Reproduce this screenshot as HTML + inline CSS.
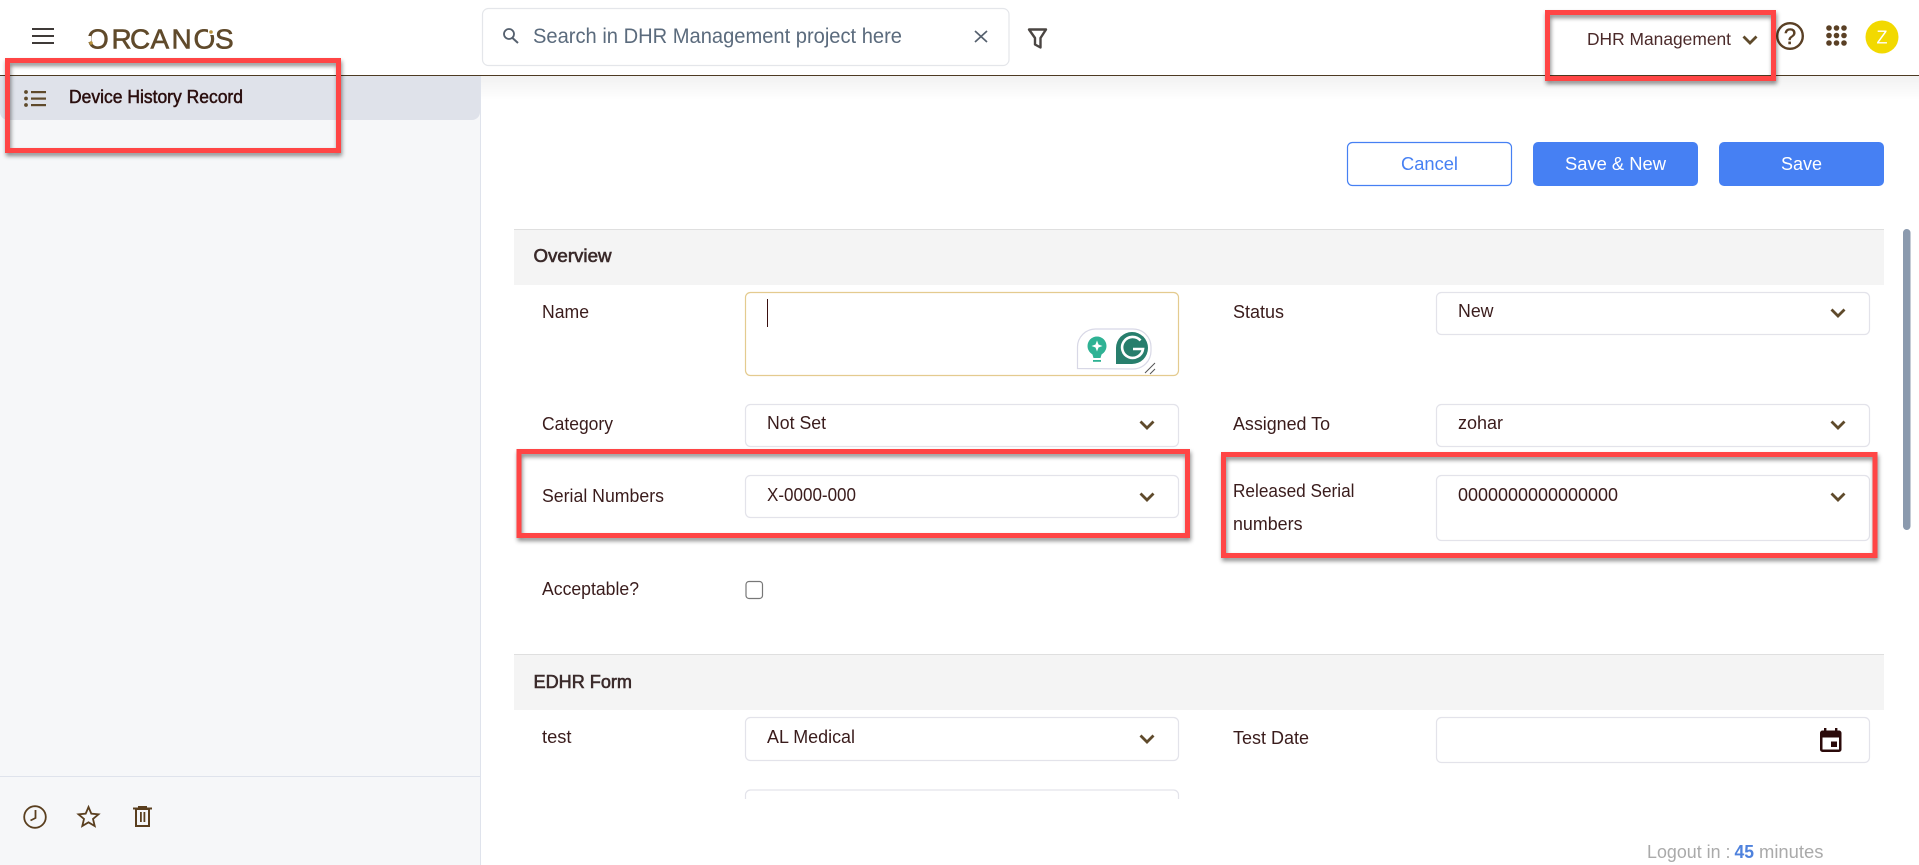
<!DOCTYPE html>
<html lang="en">
<head>
<meta charset="utf-8">
<title>DHR Management</title>
<style>
html,body{margin:0;padding:0;background:#fff;width:1919px;height:865px;overflow:hidden}
svg{display:block}
text{font-family:"Liberation Sans",Arial,sans-serif}
.l{font-size:18px;fill:#3a1c1c}
.v{font-size:18px;fill:#3a1c1c}
.h{font-size:18px;fill:#3a2a2a;stroke:#3a2a2a;stroke-width:.6}
.box{fill:#fff;stroke:#e3e3ea;stroke-width:1.2}
.red{fill:none;stroke:#ff4444;stroke-width:5}
</style>
</head>
<body>
<svg width="1919" height="865" viewBox="0 0 1919 865" xmlns="http://www.w3.org/2000/svg">
<defs>
<linearGradient id="hs" x1="0" y1="0" x2="0" y2="1"><stop offset="0" stop-color="#f1f1f1"/><stop offset="1" stop-color="#fff"/></linearGradient>
<filter id="ds" x="-5%" y="-15%" width="110%" height="130%"><feDropShadow dx="1" dy="3" stdDeviation="2" flood-color="#000" flood-opacity=".45"/></filter>
<path id="chev" d="M-6.500 -3.500 L0 3 L6.500 -3.500" fill="none" stroke="#5f4a2b" stroke-width="2.800"/>
</defs>

<!-- page -->
<rect width="1919" height="865" fill="#fff"/>
<rect x="481" y="76" width="1438" height="24" fill="url(#hs)"/>

<!-- sidebar -->
<rect x="0" y="76" width="480" height="789" fill="#f6f7f9"/>
<rect x="480" y="76" width="1" height="789" fill="#dfe3ec"/>
<path d="M0 76H480V112a8 8 0 0 1-8 8H8a8 8 0 0 1-8-8Z" fill="#dfe2ea"/>
<g fill="#5f4a2b">
<circle cx="26" cy="92" r="1.900"/><circle cx="26" cy="98.500" r="1.900"/><circle cx="26" cy="105" r="1.900"/>
<rect x="31" y="91" width="15" height="2.200"/><rect x="31" y="97.500" width="15" height="2.200"/><rect x="31" y="104" width="15" height="2.200"/>
</g>
<text x="69" y="103" font-size="18" fill="#2a0e0e" stroke="#2a0e0e" stroke-width=".5" textLength="174" lengthAdjust="spacingAndGlyphs">Device History Record</text>
<rect x="0" y="776" width="480" height="1" fill="#dfe3ec"/>
<!-- clock -->
<circle cx="35" cy="817" r="10.800" fill="none" stroke="#5a3f1f" stroke-width="1.800"/>
<path d="M35.500 810V818L30.500 820.500" fill="none" stroke="#5a3f1f" stroke-width="1.800"/>
<!-- star -->
<path d="M88.500 807L91.300 813.600 98.500 814.300 93 819 94.700 826 88.500 822.300 82.300 826 84 819 78.500 814.300 85.700 813.600Z" fill="none" stroke="#5a3f1f" stroke-width="1.800"/>
<!-- trash -->
<g fill="#5a3f1f">
<rect x="133" y="807.500" width="19" height="2"/><rect x="138" y="806" width="9" height="2"/>
<path d="M135 809H150V827H135ZM137 810V825H148V810Z" fill-rule="evenodd"/>
<rect x="140" y="812" width="1.800" height="10"/><rect x="143.500" y="812" width="1.800" height="10"/>
</g>

<!-- header -->
<rect x="0" y="75" width="1919" height="1" fill="#4d3a22"/>
<g fill="#3f3a38">
<rect x="32" y="28" width="22" height="2"/><rect x="32" y="35" width="22" height="2"/><rect x="32" y="42" width="22" height="2"/>
</g>
<!-- logo -->
<text x="87 111.500 130 150.500 171.500 193.500 215" y="48.500" font-size="28" fill="#604a2b" stroke="#604a2b" stroke-width=".6">ORCANOS</text>
<rect x="85" y="36" width="6" height="6" fill="#fff"/>
<circle cx="91" cy="43" r="1.800" fill="#b8923c"/>
<rect x="208" y="28" width="7" height="7" fill="#fff"/>
<circle cx="211" cy="32" r="1.800" fill="#b8923c"/>

<!-- search -->
<rect x="482.500" y="8.500" width="526.500" height="57" rx="6" fill="#fff" stroke="#e4e6ea" stroke-width="1.200"/>
<circle cx="509" cy="34" r="5" fill="none" stroke="#55606e" stroke-width="1.800"/>
<path d="M512.500 38L518 43" stroke="#55606e" stroke-width="2"/>
<text x="533" y="43" font-size="21" fill="#5b6b7d" textLength="369" lengthAdjust="spacingAndGlyphs">Search in DHR Management project here</text>
<path d="M975 31L987 42M987 31L975 42" stroke="#55606e" stroke-width="1.700"/>
<path d="M1029 29.500H1046L1040.500 38V47.500L1035 44.500V38Z" fill="none" stroke="#4a4542" stroke-width="2.400" stroke-linejoin="round"/>

<!-- right header -->
<text x="1587" y="45" font-size="17.500" fill="#4b2a2a" textLength="144" lengthAdjust="spacingAndGlyphs">DHR Management</text>
<use href="#chev" x="1750" y="40"/>
<circle cx="1790" cy="36" r="12.800" fill="none" stroke="#5a4025" stroke-width="2.400"/>
<text x="1790" y="44" font-size="22" fill="#5a4025" stroke="#5a4025" stroke-width=".5" text-anchor="middle">?</text>
<g fill="#5a4025">
<circle cx="1829" cy="28" r="2.800"/><circle cx="1836.500" cy="28" r="2.800"/><circle cx="1844" cy="28" r="2.800"/>
<circle cx="1829" cy="35.500" r="2.800"/><circle cx="1836.500" cy="35.500" r="2.800"/><circle cx="1844" cy="35.500" r="2.800"/>
<circle cx="1829" cy="43" r="2.800"/><circle cx="1836.500" cy="43" r="2.800"/><circle cx="1844" cy="43" r="2.800"/>
</g>
<circle cx="1882" cy="37" r="16.500" fill="#f2d900"/>
<text x="1882" y="43.500" font-size="18" fill="#fff" text-anchor="middle">Z</text>

<!-- buttons -->
<rect x="1347.500" y="142.500" width="164" height="43" rx="5" fill="#fff" stroke="#4680f3" stroke-width="1.200"/>
<text x="1401" y="170" font-size="18" fill="#4680f3" textLength="57" lengthAdjust="spacingAndGlyphs">Cancel</text>
<rect x="1533" y="142" width="165" height="44" rx="5" fill="#4680f3"/>
<text x="1565" y="170" font-size="18" fill="#fff" textLength="101" lengthAdjust="spacingAndGlyphs">Save &amp; New</text>
<rect x="1719" y="142" width="165" height="44" rx="5" fill="#4680f3"/>
<text x="1781" y="170" font-size="18" fill="#fff" textLength="41" lengthAdjust="spacingAndGlyphs">Save</text>

<!-- Overview -->
<rect x="514" y="229" width="1370" height="56" fill="#f4f4f4"/>
<rect x="514" y="229" width="1370" height="1" fill="#dfdfdf"/>
<text class="h" x="533.500" y="262" textLength="78" lengthAdjust="spacingAndGlyphs">Overview</text>

<text class="l" x="542" y="318" textLength="47" lengthAdjust="spacingAndGlyphs">Name</text>
<rect x="745.500" y="292.500" width="433" height="83" rx="5" fill="#fff" stroke="#e4cb8f" stroke-width="1.200"/>
<rect x="767" y="299" width="1" height="28" fill="#3a1010"/>
<!-- grammarly widget -->
<path d="M1077.500 368.500V347a18 18 0 0 1 18-18H1133a18 18 0 0 1 18 18V351a18 18 0 0 1-18 18Z" fill="#fff" stroke="#d8d8e6" stroke-width="1.200"/>
<circle cx="1097" cy="346" r="9.500" fill="#2fb294"/>
<path d="M1092 353H1102L1100.500 358H1093.500Z" fill="#2fb294"/>
<rect x="1093" y="360" width="8" height="1.800" fill="#2fb294"/>
<path d="M1097 340.500L1098.500 344.500 1102.500 346 1098.500 347.500 1097 351.500 1095.500 347.500 1091.500 346 1095.500 344.500Z" fill="#fff"/>
<path d="M1116 348a16 16 0 1 1 16 16H1116Z" fill="#277e6c"/>
<path d="M1140.500 340.500A10.500 10.500 0 1 0 1143 349H1133" fill="none" stroke="#fff" stroke-width="2.600"/>
<path d="M1145 373L1155 363M1150 374L1155 369" stroke="#555" stroke-width="1"/>

<text class="l" x="1233" y="318" textLength="51" lengthAdjust="spacingAndGlyphs">Status</text>
<rect class="box" x="1436.500" y="292.500" width="433" height="42" rx="5"/>
<text class="v" x="1458" y="317" textLength="35.500" lengthAdjust="spacingAndGlyphs">New</text>
<use href="#chev" x="1838" y="313"/>

<text class="l" x="542" y="430" textLength="71" lengthAdjust="spacingAndGlyphs">Category</text>
<rect class="box" x="745.500" y="404.500" width="433" height="42" rx="5"/>
<text class="v" x="767" y="429" textLength="59" lengthAdjust="spacingAndGlyphs">Not Set</text>
<use href="#chev" x="1147" y="425"/>

<text class="l" x="1233" y="430" textLength="97" lengthAdjust="spacingAndGlyphs">Assigned To</text>
<rect class="box" x="1436.500" y="404.500" width="433" height="42" rx="5"/>
<text class="v" x="1458" y="429" textLength="45" lengthAdjust="spacingAndGlyphs">zohar</text>
<use href="#chev" x="1838" y="425"/>

<text class="l" x="542" y="502" textLength="122" lengthAdjust="spacingAndGlyphs">Serial Numbers</text>
<rect class="box" x="745.500" y="475.500" width="433" height="42" rx="5"/>
<text class="v" x="767" y="501" textLength="89" lengthAdjust="spacingAndGlyphs">X-0000-000</text>
<use href="#chev" x="1147" y="497"/>

<text class="l" x="1233" y="497" textLength="121.500" lengthAdjust="spacingAndGlyphs">Released Serial</text>
<text class="l" x="1233" y="530" textLength="69.500" lengthAdjust="spacingAndGlyphs">numbers</text>
<rect class="box" x="1436.500" y="475.500" width="433" height="65" rx="5"/>
<text class="v" x="1458" y="501" textLength="160" lengthAdjust="spacingAndGlyphs">0000000000000000</text>
<use href="#chev" x="1838" y="497"/>

<text class="l" x="542" y="595" textLength="97" lengthAdjust="spacingAndGlyphs">Acceptable?</text>
<rect x="746" y="581.500" width="16.500" height="17" rx="3" fill="#fff" stroke="#777" stroke-width="1.200"/>

<!-- EDHR -->
<rect x="514" y="654" width="1370" height="56" fill="#f4f4f4"/>
<rect x="514" y="654" width="1370" height="1" fill="#dfdfdf"/>
<text class="h" x="533.500" y="688" textLength="98.500" lengthAdjust="spacingAndGlyphs">EDHR Form</text>

<text class="l" x="542" y="743" textLength="29.500" lengthAdjust="spacingAndGlyphs">test</text>
<rect class="box" x="745.500" y="717.500" width="433" height="43" rx="5"/>
<text class="v" x="767" y="743" textLength="88" lengthAdjust="spacingAndGlyphs">AL Medical</text>
<use href="#chev" x="1147" y="739"/>

<text class="l" x="1233" y="744" textLength="76" lengthAdjust="spacingAndGlyphs">Test Date</text>
<rect class="box" x="1436.500" y="717.500" width="433" height="45" rx="5"/>
<path d="M1820 733a2.500 2.500 0 0 1 2.500-2.500H1839a2.500 2.500 0 0 1 2.500 2.500V749.500a2.500 2.500 0 0 1-2.500 2.500H1822.500a2.500 2.500 0 0 1-2.500-2.500ZM1822.500 737.500V749.500H1839V737.500Z" fill="#2b0a0a" fill-rule="evenodd"/>
<rect x="1824" y="728" width="2.400" height="3" fill="#2b0a0a"/><rect x="1835" y="728" width="2.400" height="3" fill="#2b0a0a"/>
<rect x="1831" y="741.500" width="6" height="5.500" fill="#2b0a0a"/>

<path d="M745.500 799V795a5 5 0 0 1 5-5H1173.500a5 5 0 0 1 5 5V799" fill="#fff" stroke="#e3e3ea" stroke-width="1.200"/>

<!-- scrollbar -->
<rect x="1903" y="229" width="7.500" height="301" rx="3.700" fill="#8b9aae"/>

<!-- logout -->
<text x="1647" y="858" font-size="18" fill="#aaaaaa" textLength="83.500" lengthAdjust="spacingAndGlyphs">Logout in :</text>
<text x="1734.500" y="858" font-size="18" font-weight="bold" fill="#4f82dd" textLength="19.500" lengthAdjust="spacingAndGlyphs">45</text>
<text x="1759" y="858" font-size="18" fill="#aaaaaa" textLength="64.500" lengthAdjust="spacingAndGlyphs">minutes</text>

<!-- red annotation boxes -->
<g filter="url(#ds)">
<rect class="red" x="7.500" y="60.500" width="331" height="90"/>
<rect class="red" x="1547.500" y="12.500" width="226" height="66"/>
<rect class="red" x="519" y="451.500" width="668.500" height="84"/>
<rect class="red" x="1223.500" y="454.500" width="651.500" height="101"/>
</g>
</svg>
</body>
</html>
